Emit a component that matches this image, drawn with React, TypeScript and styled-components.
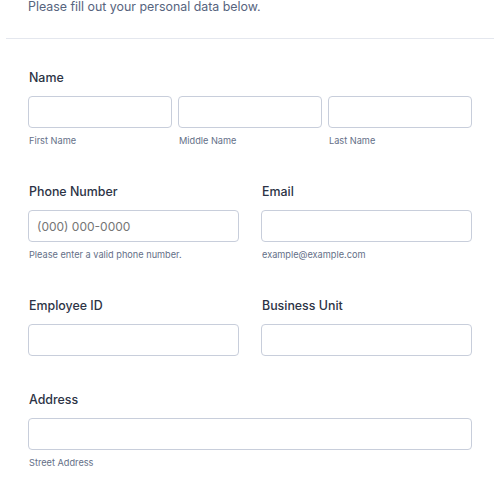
import { FC } from 'react'
import styled, { createGlobalStyle } from 'styled-components'

const GlobalStyle = createGlobalStyle`
  * {
    box-sizing: border-box;
  }

  body {
    margin: 0;
    background: #ffffff;
    font-family: Inter, "Noto Sans", sans-serif;
    overflow: hidden;
  }
`;

const Page = styled.div`
  width: 500px;
  padding: 0 6px;
`;

const Header = styled.div`
  display: flow-root;
  padding: 0 22px 0;
  height: 39px;
  border-bottom: 1px solid #e4e7ee;
`;

const Subtitle = styled.p`
  margin: -3px 0 0;
  font-size: 12.4px;
  line-height: 20px;
  color: #57647e;
`;

const Fields = styled.div`
  padding: 29px 22px 0;
  display: flex;
  flex-direction: column;
  gap: 34px;
`;

const Row = styled.div<{ cols: number; gap: number }>`
  display: grid;
  grid-template-columns: repeat(${({ cols }) => cols}, 1fr);
  column-gap: ${({ gap }) => gap}px;
`;

const Field = styled.div`
  display: flex;
  flex-direction: column;
  min-width: 0;
`;

const Label = styled.label`
  padding-left: 1px;
  font-size: 12.4px;
  line-height: 20px;
  font-weight: 500;
  color: #2c3345;
  margin-bottom: 8px;
  height: 20px;
`;

const Input = styled.input`
  height: 32px;
  width: 100%;
  border: 1px solid #c8cedb;
  border-radius: 4px;
  padding: 0 8px;
  font-family: Inter, "Noto Sans", sans-serif;
  font-size: 12px;
  color: #2c3345;
  background: #ffffff;
  outline: none;

  ::placeholder {
    color: #9aa1b1;
  }
`;

const Sublabel = styled.span`
  padding-left: 1px;
  margin-top: 6px;
  font-size: 9.2px;
  line-height: 14px;
  color: #646f87;
`;

type FieldProps = {
  label?: string;
  sublabel?: string;
  placeholder?: string;
};

const FormField: FC<FieldProps> = ({ label, sublabel, placeholder }) => (
  <Field>
    {label !== undefined && <Label>{label}</Label>}
    <Input placeholder={placeholder} />
    {sublabel && <Sublabel>{sublabel}</Sublabel>}
  </Field>
)

const NameGroup = styled.div`
  display: flex;
  flex-direction: column;
`;

const App: FC = () => {
  return (
    <>
      <GlobalStyle />
      <Page>
        <Header>
          <Subtitle>Please fill out your personal data below.</Subtitle>
        </Header>
        <Fields>
          <NameGroup>
            <Label>Name</Label>
            <Row cols={3} gap={6}>
              <FormField sublabel="First Name" />
              <FormField sublabel="Middle Name" />
              <FormField sublabel="Last Name" />
            </Row>
          </NameGroup>
          <Row cols={2} gap={22}>
            <FormField label="Phone Number" placeholder="(000) 000-0000" sublabel="Please enter a valid phone number." />
            <FormField label="Email" sublabel="example@example.com" />
          </Row>
          <Row cols={2} gap={22}>
            <FormField label="Employee ID" />
            <FormField label="Business Unit" />
          </Row>
          <FormField label="Address" sublabel="Street Address" />
        </Fields>
      </Page>
    </>
  )
}

export default App
